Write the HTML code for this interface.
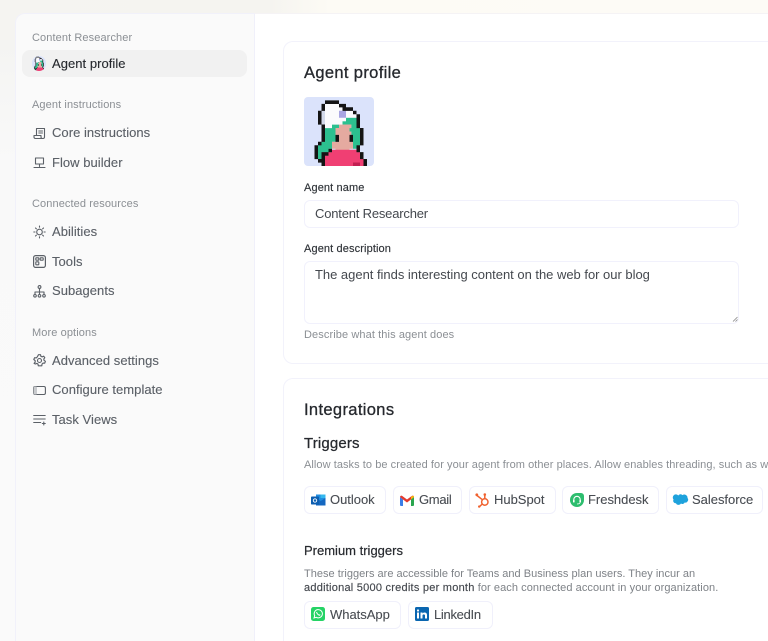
<!DOCTYPE html>
<html><head><meta charset="utf-8"><style>
html,body{margin:0;padding:0;width:768px;height:641px;overflow:hidden;background:#fff}
body{position:relative;font-family:"Liberation Sans",sans-serif}
#w{position:absolute;left:0;top:0;width:768px;height:641px;filter:blur(.35px);overflow:hidden}
#w div{position:absolute;box-sizing:border-box;white-space:nowrap}
.bg{left:0;top:0;width:768px;height:641px;background:linear-gradient(90deg,#f5f4f1 0,#f5f4f0 270px,#fdfbf5 330px,#fdfbf6 100%)}
.bgl{left:0;top:40px;width:15px;height:601px;background:linear-gradient(180deg,#f4f4f2 0,#f9f9f9 120px,#fafafa 100%)}
.side{left:15px;top:13px;width:240px;height:628px;background:#fafafa;border:1px solid #f1f1fa;border-bottom:0;border-radius:10px 0 0 0}
.main{left:254px;top:13px;width:514px;height:628px;background:#fff;border-top:1px solid #f5f3f5;border-left:1px solid #f0f0fa}
.act{left:22px;top:50px;width:225px;height:27px;background:#f1f1f1;border-radius:8px}
.l{font-size:11px;color:#8b8f94;left:32px;letter-spacing:.1px;line-height:14px}
.n{font-size:13px;color:#5b6067;left:52px;letter-spacing:.04px;line-height:16px;-webkit-text-stroke:.12px #5b6067}
.card{left:283px;width:485px;background:#fff;border:1px solid #f2f2fb;border-right:0;border-radius:10px 0 0 10px}
.h{font-size:16.5px;color:#26292e;left:304px;font-weight:400;letter-spacing:.35px;line-height:20px;-webkit-text-stroke:.3px #26292e}
.f{font-size:11px;color:#2f3338;left:304px;letter-spacing:.12px;line-height:14px;-webkit-text-stroke:.15px #2f3338}
.inp{left:304px;width:435px;background:#fff;border:1px solid #f1f1fc;border-radius:6px}
.v{font-size:13px;color:#44484e;left:315px;letter-spacing:-.02px;line-height:16px}
.s{font-size:11px;color:#8b8f94;letter-spacing:.06px;line-height:14px;left:304px}
.chip{height:28px;background:#fff;border:1px solid #f0f0fb;border-radius:6px}
.c{font-size:13px;color:#484c52;letter-spacing:-.02px;line-height:16px;-webkit-text-stroke:.1px #484c52}
svg{position:absolute;overflow:visible}
.i{fill:none;stroke:#5b6067;stroke-width:1.1;stroke-linecap:round;stroke-linejoin:round}
</style></head><body><div id="w">
<div class="bg"></div>
<div class="bgl"></div>
<div class="side"></div>
<div class="main"></div>
<div class="act"></div>

<div class="l" style="top:31px">Content Researcher</div>
<svg style="left:32px;top:56px;overflow:hidden;border-radius:7px" width="14" height="15" viewBox="0 0 20 20" preserveAspectRatio="none"><use href="#av"/></svg>
<div class="n" style="top:56px;color:#26292e;-webkit-text-stroke:.12px #26292e">Agent profile</div>

<div class="l" style="top:98px">Agent instructions</div>
<svg class="i" style="left:33px;top:127px" width="13" height="13" viewBox="0 0 13 13">
<path d="M3.500 1.500h8v8.500a1.500 1.500 0 0 1-1.500 1.500H2.500A1.500 1.500 0 0 1 1 10V8.500h7V10a1.500 1.500 0 0 0 1.500 1.500M3.500 8.500v-7M5.800 4h3.700M5.800 6h3.700"/></svg>
<div class="n" style="top:125px">Core instructions</div>
<svg class="i" style="left:33px;top:157px" width="13" height="12" viewBox="0 0 13 12">
<path d="M2.500 1h8v6h-8zM6.500 7v2.500M1 10.500h11"/></svg>
<div class="n" style="top:155px">Flow builder</div>

<div class="l" style="top:197px">Connected resources</div>
<svg class="i" style="left:33px;top:225px" width="13" height="14" viewBox="0 0 13 14">
<circle cx="6.500" cy="7" r="2.800"/><path d="M6.500 1v1.200M6.500 11.800V13M.8 7H2M11 7h1.200M2.500 3l.9.9M9.600 10.100l.9.9M2.500 11l.9-.9M9.600 3.900l.9-.9"/></svg>
<div class="n" style="top:224px">Abilities</div>
<svg class="i" style="left:33px;top:255px" width="13" height="13" viewBox="0 0 13 13">
<rect x=".6" y=".6" width="11.800" height="11.800" rx="2" stroke-width="1.200"/>
<rect x="2.800" y="2.800" width="3" height="2.400" rx=".4"/><rect x="7.200" y="2.800" width="3" height="2.400" rx=".4"/><rect x="2.800" y="6.800" width="3" height="3" rx=".6"/></svg>
<div class="n" style="top:254px">Tools</div>
<svg class="i" style="left:33px;top:285px" width="13" height="13" viewBox="0 0 13 13">
<circle cx="6.500" cy="2" r="1.400"/><circle cx="2" cy="10.800" r="1.300"/><circle cx="6.500" cy="10.800" r="1.300"/><circle cx="11" cy="10.800" r="1.300"/><path d="M6.500 3.400v6M2 9.500V7h9v2.500"/></svg>
<div class="n" style="top:283px">Subagents</div>

<div class="l" style="top:326px">More options</div>
<svg class="i" style="left:33px;top:354px" width="13" height="13" viewBox="0 0 13 13">
<circle cx="6.500" cy="6.500" r="2"/><path d="M5.500.7h2l.4 1.600 1.300.6 1.500-.7 1.100 1.500-1 1.300.2 1.300 1.400 1-.7 1.900-1.700-.1-1 1-.2 1.700H5.300l-.3-1.700-1.100-.7-1.600.6L1.100 9.400l1.100-1.300-.1-1.500L.8 5.500l.8-1.800 1.700.2 1-1z" stroke-width="1.150"/></svg>
<div class="n" style="top:353px">Advanced settings</div>
<svg class="i" style="left:33px;top:385px" width="13" height="11" viewBox="0 0 13 11">
<rect x=".6" y="1.500" width="11.800" height="8" rx="1.500"/><rect x=".6" y="1.500" width="3.400" height="8" rx="1" fill="#c9cbce" stroke="none"/></svg>
<div class="n" style="top:382px">Configure template</div>
<svg class="i" style="left:33px;top:414px" width="13" height="12" viewBox="0 0 13 12">
<path d="M.7 1.500h11.500M.7 5h11.500M.7 8.500h7M10.800 8v3M9.300 9.500h3"/></svg>
<div class="n" style="top:412px">Task Views</div>

<div class="card" style="top:41px;height:323px"></div>
<div class="card" style="top:378px;height:263px;border-bottom:0;border-radius:10px 0 0 0"></div>

<div class="h" style="top:63px">Agent profile</div>
<svg style="left:304px;top:97px;overflow:hidden;border-radius:4px" width="70" height="69" viewBox="0 0 20 20" preserveAspectRatio="none" fill="none">
<g id="av" fill="none" stroke-width="1.03">
<rect width="20" height="20" fill="#dbe3fb" stroke="none"/>
<path stroke="#2cc08f" d="M12 6.500H15M11 7.500H15M8 8.500H10M13.500 8.500H15M6 9.500H9M13 9.500H16M6 10.500H9M13.500 10.500H16M6 11.500H9M14 11.500H16M6 12.500H9M14 12.500H16M5 13.500H8M14 13.500H16M4 14.500H8M14 14.500H15M4 15.500H7M4 16.500H5M4 17.500H5"/>
<path stroke="#e5aaa0" d="M10 8.500H13.500M9 9.500H13M9 10.500H13.500M10 11.500H13M10 12.500H13M8 13.500H14M8 14.500H14M9 15.200H13"/>
<path stroke="#f03f73" d="M8 15.800H15M7 16.500H16M6 17.500H16M6 18.500H17M6 19.500H14M16 19.500H17"/>
<path stroke="#c21f51" d="M14 19.500H16"/>
<path stroke="#fbfbfd" d="M6 2.500H10M6 3.500H11M6 4.500H10M12 4.500H14M6 5.500H10M12 5.500H15M6 6.500H12M6 7.500H11M6 8.500H8"/>
<path stroke="#d3d9ea" d="M5 4.500H6M5 5.500H6M5 6.500H6M5 7.500H6"/>
<path stroke="#a9a6e2" d="M10 4.500H12M10 5.500H12"/>
<path stroke="#141414" d="M6 1.500H10M5 2.500H6M10 2.500H12M5 3.500H6M11 3.500H14M4 4.500H5M14 4.500H15M4 5.500H5M15 5.500H16M4 6.500H5M15 6.500H16M4 7.500H5M15 7.500H16M5 8.500H6M15 8.500H16M5 9.500H6M16 9.500H17M5 10.500H6M16 10.500H17M5 11.500H6M9 11.500H10M13 11.500H14M16 11.500H17M5 12.500H6M9 12.500H10M13 12.500H14M16 12.500H17M4 13.500H5M16 13.500H17M3 14.500H4M15 14.500H16M3 15.500H4M7 15.500H8M15 15.500H16M3 16.500H4M5 16.500H7M16 16.500H17M3 17.500H4M5 17.500H6M16 17.500H17M4 18.500H6M17 18.500H18M5 19.500H6M17 19.500H18"/>
</g></svg>

<div class="f" style="top:181px">Agent name</div>
<div class="inp" style="top:200px;height:28px"></div>
<div class="v" style="top:206px;letter-spacing:-.19px">Content Researcher</div>

<div class="f" style="top:242px">Agent description</div>
<div class="inp" style="top:261px;height:63px"></div>
<div class="v" style="top:267px">The agent finds interesting content on the web for our blog</div>
<svg style="left:732px;top:316px" width="6" height="6" viewBox="0 0 6 6"><path d="M1 5.500L5.500 1M3.500 5.500L5.500 3.500" stroke="#888" stroke-width=".8" fill="none"/></svg>
<div class="s" style="top:328px;letter-spacing:.1px">Describe what this agent does</div>

<div class="h" style="top:400px">Integrations</div>
<div class="h" style="top:434px;font-size:15px;letter-spacing:.15px;-webkit-text-stroke:.25px #26292e">Triggers</div>
<div class="s" style="top:458px">Allow tasks to be created for your agent from other places. Allow enables threading, such as whe</div>

<div class="chip" style="left:304px;top:486px;width:82px"></div>
<svg style="left:311px;top:493px" width="15" height="14" viewBox="0 0 15 14"><path d="M5 1.500h9.500v11H5z" fill="#1f8de0"/><path d="M9.500 1.500h5V5h-5z" fill="#35b8ee"/><path d="M5 5l4.700 3 4.800-3v7.500H5z" fill="#1467c0"/><rect x="0" y="3.500" width="8" height="8" rx=".8" fill="#0c5eb0"/><circle cx="4" cy="7.500" r="1.700" fill="none" stroke="#fff" stroke-width=".9"/></svg>
<div class="c" style="left:330px;top:492px">Outlook</div>

<div class="chip" style="left:393px;top:486px;width:69px"></div>
<svg style="left:400px;top:495px" width="14" height="11" viewBox="0 0 14 11"><path d="M0 2v8a1 1 0 0 0 1 1h2V4.500z" fill="#3a7ee8"/><path d="M14 2v8a1 1 0 0 1-1 1h-2V4.500z" fill="#2aa64f"/><path d="M0 2a1.400 1.400 0 0 1 2.300-1L7 4.500 11.700 1A1.400 1.400 0 0 1 14 2L11 4.500 7 7.500 3 4.500z" fill="#e33a2e"/><path d="M11 4.500L14 2V.8L11 1.500z" fill="#f6b70c"/></svg>
<div class="c" style="left:419px;top:492px;letter-spacing:-.3px">Gmail</div>

<div class="chip" style="left:469px;top:486px;width:87px"></div>
<svg style="left:475px;top:492px" width="15" height="16" viewBox="0 0 15 16" fill="none" stroke="#f0622f" stroke-width="1.500"><circle cx="9.800" cy="10" r="3.200"/><path d="M9.800 6.800V3.500M7.500 7.800L2 3.500M7.300 12l-2.500 2.300"/><circle cx="9.800" cy="2.500" r="1.300" fill="#f0622f" stroke="none"/><circle cx="1.800" cy="2.800" r="1.400" fill="#f0622f" stroke="none"/><circle cx="4.200" cy="14.600" r="1.200" fill="#f0622f" stroke="none"/></svg>
<div class="c" style="left:494px;top:492px">HubSpot</div>

<div class="chip" style="left:562px;top:486px;width:97px"></div>
<svg style="left:570px;top:493px" width="14" height="14" viewBox="0 0 14 14"><path d="M7 0h4a3 3 0 0 1 3 3v4a7 7 0 1 1-7-7z" fill="#2dbd6e"/><path d="M3.800 8V6.500a3.200 3.200 0 0 1 6.400 0V8" fill="none" stroke="#fff" stroke-width="1.100"/><rect x="3" y="7" width="1.600" height="2.500" rx=".6" fill="#fff"/><rect x="9.400" y="7" width="1.600" height="2.500" rx=".6" fill="#fff"/><path d="M10 9.500c0 1.200-1.500 1.500-3 1.500" fill="none" stroke="#fff" stroke-width=".8"/></svg>
<div class="c" style="left:588px;top:492px">Freshdesk</div>

<div class="chip" style="left:666px;top:486px;width:97px"></div>
<svg style="left:672px;top:494px" width="16" height="11" viewBox="0 0 16 11"><path d="M6.300 1.500a2.700 2.700 0 0 1 4.200-.4 3.200 3.200 0 0 1 5 2.900 2.800 2.800 0 0 1-2.800 4.500 2.400 2.400 0 0 1-3.700 1 2.800 2.800 0 0 1-5-.3A2.500 2.500 0 0 1 1.500 5.500a2.800 2.800 0 0 1 4.800-4z" fill="#1ea2dc"/></svg>
<div class="c" style="left:692px;top:492px">Salesforce</div>

<div class="h" style="top:541px;font-size:13px;letter-spacing:0;-webkit-text-stroke:.2px #26292e">Premium triggers</div>
<div class="s" style="top:567px;color:#7e8287;letter-spacing:.01px">These triggers are accessible for Teams and Business plan users. They incur an</div>
<div class="s" style="top:581px;color:#7e8287;letter-spacing:.07px"><span style="color:#44484e;letter-spacing:.24px;-webkit-text-stroke:.15px #44484e">additional 5000 credits per month</span> for each connected account in your organization.</div>

<div class="chip" style="left:304px;top:601px;width:97px"></div>
<svg style="left:311px;top:607px" width="14" height="14" viewBox="0 0 14 14"><rect width="14" height="14" rx="2.500" fill="#25d366"/><path d="M3 11l.7-2.300A4.100 4.100 0 1 1 5.300 10.300z" fill="none" stroke="#fff" stroke-width="1"/><path d="M5.500 5c.5 1.700 1.500 2.800 3 3.300l.7-.8" fill="none" stroke="#fff" stroke-width="1"/></svg>
<div class="c" style="left:330px;top:607px">WhatsApp</div>

<div class="chip" style="left:408px;top:601px;width:85px"></div>
<svg style="left:415px;top:607px" width="14" height="14" viewBox="0 0 14 14"><rect width="14" height="14" rx="1.500" fill="#0a66b0"/><rect x="2" y="5.500" width="2" height="6" fill="#fff"/><circle cx="3" cy="3.500" r="1.100" fill="#fff"/><path d="M5.500 5.500h2v1c.8-1.500 4.500-1.600 4.500 1.500v3.500h-2V8.500c0-1.500-2.500-1.500-2.500 0v3h-2z" fill="#fff"/></svg>
<div class="c" style="left:434px;top:607px;letter-spacing:-.3px">LinkedIn</div>
</div></body></html>
